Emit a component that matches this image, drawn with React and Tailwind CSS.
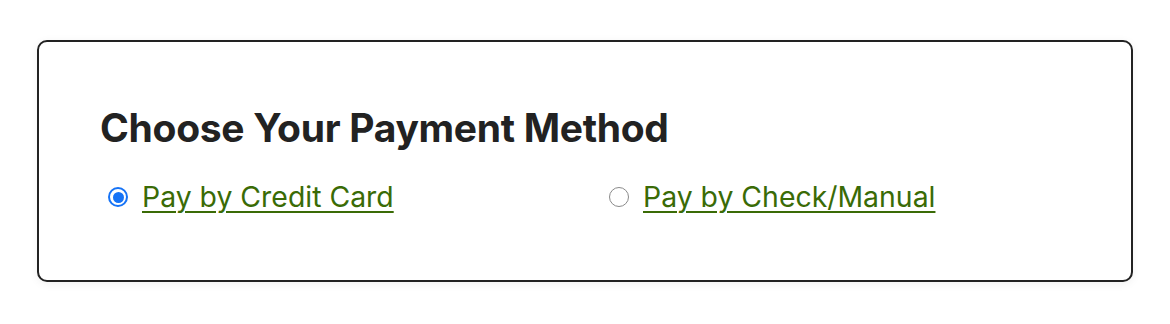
export default function App() {
  return (
    <div className="w-[1170px] h-[324px] bg-white pt-[40px] pl-[37px]" style={{ fontFamily: "Inter, 'Liberation Sans', sans-serif" }}>
      <div className="w-[1096px] h-[242px] border-2 border-[#222] rounded-[10px] bg-white shadow-[0_2px_10px_rgba(0,0,0,0.06)] pl-[61px] pt-[62px]">
        <h2 className="text-[39px] leading-[48px] font-bold text-[#222] tracking-[-0.3px]">Choose Your Payment Method</h2>
        <div className="flex mt-[27px]">
          <label className="w-[509px] flex items-center pl-[8px]">
            <span className="w-[20px] h-[20px] rounded-full border-[2.5px] border-[#1673f6] flex items-center justify-center">
              <span className="w-[11px] h-[11px] rounded-full bg-[#1673f6]"></span>
            </span>
            <span className="ml-[14px] text-[28.4px] leading-[36px] text-[#3a6b06] underline underline-offset-[4px] decoration-[1.5px]">Pay by Credit Card</span>
          </label>
          <label className="flex items-center">
            <span className="w-[20px] h-[20px] rounded-full border border-[#8a8a8a] bg-white"></span>
            <span className="ml-[14px] text-[28.4px] leading-[36px] text-[#3a6b06] underline underline-offset-[4px] decoration-[1.5px]">Pay by Check/Manual</span>
          </label>
        </div>
      </div>
    </div>
  );
}
